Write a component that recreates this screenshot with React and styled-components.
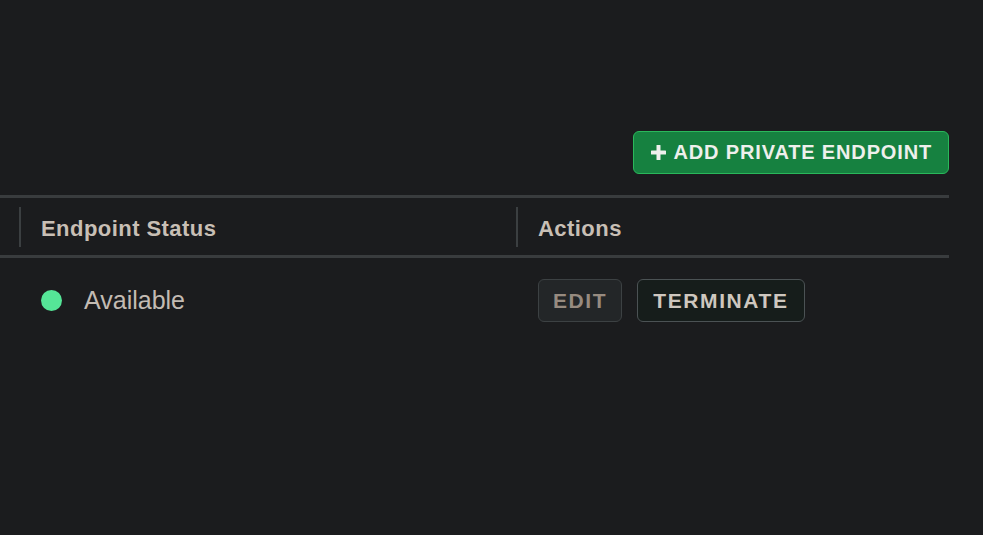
import React from "react";
import styled, { createGlobalStyle } from "styled-components";

const Global = createGlobalStyle`
  html, body { margin: 0; padding: 0; background: #1b1c1e; }
  body { font-family: "Liberation Sans", Arial, sans-serif; }
  * { box-sizing: border-box; }
`;

const Page = styled.div`
  width: 983px;
  height: 535px;
  padding: 131px 34px 0 0;
  background: #1b1c1e;
  display: flex;
  flex-direction: column;
  overflow: hidden;
`;

const Toolbar = styled.div`
  display: flex;
  justify-content: flex-end;
`;

const PrimaryButton = styled.button`
  height: 43px;
  padding: 0 16px 0 17px;
  display: flex;
  align-items: center;
  gap: 8px;
  background: #168140;
  border: 1.5px solid #2ab85b;
  border-radius: 6px;
  color: #eef0ec;
  font-family: "Liberation Sans", Arial, sans-serif;
  font-weight: 700;
  font-size: 20px;
  letter-spacing: 0.85px;
  text-transform: uppercase;
  cursor: pointer;
`;

const Table = styled.div`
  margin-top: 21px;
  border-top: 3px solid #393c3e;
`;

const Row = styled.div`
  display: grid;
  grid-template-columns: 19px 497px 1fr;
  align-items: center;
  height: ${(p) => p.$height}px;
  border-bottom: ${(p) => (p.$head ? "3px solid #393c3e" : "none")};
`;

const HeadCell = styled.div`
  position: relative;
  height: 100%;
  display: flex;
  align-items: center;
  padding: 5px 0 0 22px;
  color: #c8bfb5;
  font-weight: 700;
  font-size: 22px;
  letter-spacing: 0.45px;
  &::before {
    content: "";
    position: absolute;
    left: 0;
    top: 9px;
    width: 2px;
    height: 40px;
    background: #3b3f41;
  }
`;

const Stub = styled.div``;

const Cell = styled.div`
  display: flex;
  align-items: center;
  gap: ${(p) => p.$gap || 0}px;
  padding-left: 22px;
`;

const Dot = styled.span`
  width: 21px;
  height: 21px;
  border-radius: 50%;
  background: #55e597;
  flex: none;
`;

const StatusText = styled.span`
  color: #c3bbb3;
  font-size: 25px;
  margin-left: 22px;
`;

const ActionButton = styled.button`
  height: 43px;
  padding: 0 ${(p) => p.$padX}px;
  border-radius: 6px;
  border: 1.5px solid ${(p) => p.$border};
  background: ${(p) => p.$bg};
  color: ${(p) => p.$color};
  font-family: "Liberation Sans", Arial, sans-serif;
  font-weight: 700;
  font-size: 21px;
  letter-spacing: 1.6px;
  text-transform: uppercase;
  cursor: pointer;
`;

const PlusIcon = () => (
  <svg width="15" height="15" viewBox="0 0 15 15" fill="#eef0ec">
    <rect x="5.5" y="0" width="4" height="15" rx="0.6" />
    <rect x="0" y="5.5" width="15" height="4" rx="0.6" />
  </svg>
);

export default function App() {
  return (
    <>
      <Global />
      <Page>
        <Toolbar>
          <PrimaryButton>
            <PlusIcon />
            Add Private Endpoint
          </PrimaryButton>
        </Toolbar>
        <Table>
          <Row $head $height={60}>
            <Stub />
            <HeadCell>Endpoint Status</HeadCell>
            <HeadCell>Actions</HeadCell>
          </Row>
          <Row $height={85}>
            <Stub />
            <Cell>
              <Dot />
              <StatusText>Available</StatusText>
            </Cell>
            <Cell $gap={15}>
              <ActionButton $padX={14} $bg="#232628" $border="#3c4143" $color="#978b80">
                Edit
              </ActionButton>
              <ActionButton $padX={15} $bg="#161d1b" $border="#4b5254" $color="#cec7bf">
                Terminate
              </ActionButton>
            </Cell>
          </Row>
        </Table>
      </Page>
    </>
  );
}
